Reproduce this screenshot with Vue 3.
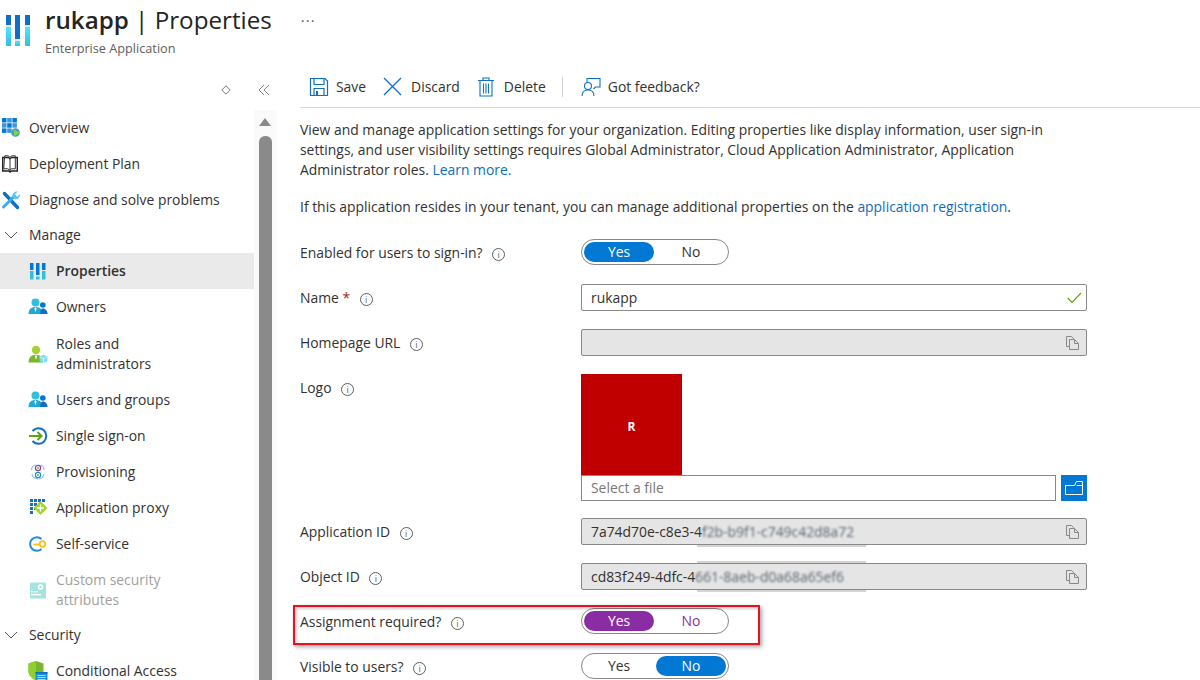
<script setup>
const nav = [
  { label: 'Overview', icon: 'overview', level: 0 },
  { label: 'Deployment Plan', icon: 'book', level: 0 },
  { label: 'Diagnose and solve problems', icon: 'tools', level: 0 },
  { label: 'Manage', group: true },
  { label: 'Properties', icon: 'props', level: 1, active: true },
  { label: 'Owners', icon: 'users', level: 1 },
  { label: 'Roles and administrators', icon: 'roles', level: 1, tall: true, extra: true },
  { label: 'Users and groups', icon: 'users', level: 1 },
  { label: 'Single sign-on', icon: 'sso', level: 1 },
  { label: 'Provisioning', icon: 'prov', level: 1 },
  { label: 'Application proxy', icon: 'proxy', level: 1 },
  { label: 'Self-service', icon: 'self', level: 1 },
  { label: 'Custom security attributes', icon: 'custom', level: 1, tall: true, disabled: true },
  { label: 'Security', group: true },
  { label: 'Conditional Access', icon: 'cond', level: 1 }
]
const icons = {
  overview: '<rect x="2" y="0" width="4.500" height="4.500" fill="#0078d4"/><rect x="7.200" y="0" width="4.500" height="4.500" fill="#3a96dd"/><rect x="12.400" y="0" width="4.500" height="4.500" fill="#0078d4"/><rect x="2" y="5.200" width="4.500" height="4.500" fill="#3a96dd"/><rect x="7.200" y="5.200" width="4.500" height="4.500" fill="#0078d4"/><rect x="12.400" y="5.200" width="4.500" height="4.500" fill="#3a96dd"/><rect x="2" y="10.400" width="4.500" height="4.500" fill="#0078d4"/><rect x="7.200" y="10.400" width="4.500" height="4.500" fill="#3a96dd"/><circle cx="15.500" cy="14.500" r="4.300" fill="#3f9ad8"/><path d="M13.500 11.500l6 3-5 4z" fill="#86d633"/>',
  book: '<path d="M2.700 3.500h5.800l1.500 1.200 1.500-1.200h5.800v13.500h-6l-1.300 1-1.300-1h-6z" fill="none" stroke="#222" stroke-width="1.400"/><path d="M10 4.700v12.300M4.700 1.800h3.500L10 3.300l1.800-1.500h3.500v13h-4l-1.800 1.200-1.800-1.200h-4z" fill="none" stroke="#333" stroke-width="1"/>',
  tools: '<path d="M4.500 3.500L17.500 17.500" stroke="#0f6fc6" stroke-width="3.400" stroke-linecap="round"/><path d="M3 2l3 1.500.5 2-2 .5z" fill="#0f6fc6"/><path d="M14.500 6L3.500 17" stroke="#38ade6" stroke-width="3" stroke-linecap="round"/><path d="M12.500 6.500c-.5-3 2-5.500 5.500-5l-3 2.500.5 2 2 .5 2.500-2.500c.3 3.500-2.500 6-5.500 5z" fill="#5cc4ef"/>',
  props: '<rect x="2" y="2" width="3.500" height="7" fill="#0078d4"/><rect x="2" y="10" width="3.500" height="8.500" fill="#32bedd"/><rect x="8" y="2" width="3.500" height="12" fill="#0078d4"/><rect x="8" y="15.500" width="3.500" height="3" fill="#32bedd"/><rect x="14" y="2" width="3.500" height="7" fill="#0078d4"/><rect x="14" y="10" width="3.500" height="8.500" fill="#32bedd"/>',
  users: '<circle cx="7.500" cy="5.500" r="4" fill="#32bedd"/><path d="M.5 17c0-4.500 2.500-7 7-7s7 2.500 7 7z" fill="#1faad6"/><circle cx="14.800" cy="8" r="2.800" fill="#0078d4"/><path d="M12 17c.3-3.500 1-5.500 2.800-5.500s4.700 1.500 4.700 5.500z" fill="#0f6fc6"/><path d="M7.500 10l-1.200 1.500 1.200 3.500 1.200-3.500z" fill="#fff"/>',
  roles: '<circle cx="8" cy="6" r="4.200" fill="#a4d233"/><path d="M.5 18.500c0-5 2.500-7.800 7.500-7.800s7 2.800 7 7.800z" fill="#76b82a"/><path d="M8 10.700l-1.200 1.500 1.200 3.500 1.200-3.500z" fill="#fff"/><path d="M15.500 10.500l4 2.200v4.300l-4 2.200-4-2.200v-4.300z" fill="#7fdbf0"/><path d="M15.500 14.700v4.500M11.500 12.700l4 2 4-2" stroke="#fff" stroke-width=".6" fill="none"/>',
  sso: '<path d="M4.500 5A7.800 7.800 0 1 1 4.500 15" fill="none" stroke="#0f6fc6" stroke-width="2"/><path d="M1 10h12.500M9.500 6l4 4-4 4" fill="none" stroke="#5ca80a" stroke-width="2"/>',
  prov: '<path d="M8 3C5 3.500 3.500 5.500 3.500 8M4 12c.5 3 3 4.800 6 5M11.500 3c3 .5 4.500 2.500 4.500 5M16 12c-.5 3-3 4.800-5.500 5" fill="none" stroke="#8cc0e8" stroke-width="1.200"/><circle cx="10" cy="6" r="2.600" fill="#fff" stroke="#8a3ea8" stroke-width="1.200"/><circle cx="10" cy="6" r="1" fill="#7fa82a"/><circle cx="10" cy="13" r="2.600" fill="#fff" stroke="#1f8fc9" stroke-width="1.200"/><circle cx="10" cy="13" r="1" fill="#7fba00"/>',
  proxy: '<g fill="#0f6fc6"><rect x="2" y="1" width="3" height="3"/><rect x="6" y="1" width="3" height="3"/><rect x="10" y="1" width="3" height="3"/><rect x="14" y="1" width="3" height="3"/><rect x="2" y="5" width="3" height="3"/><rect x="6" y="5" width="3" height="3"/><rect x="2" y="9" width="3" height="3"/><rect x="6" y="9" width="3" height="3"/><rect x="2" y="13" width="3" height="3"/></g><path d="M12.500 3l7 7-7 7-7-7z" fill="#a4d233"/><path d="M12.500 6.500v7M9 10h7" stroke="#fff" stroke-width="1.300"/>',
  self: '<path d="M13.500 5A6.800 6.800 0 1 0 13.500 15" fill="none" stroke="#1f8fd9" stroke-width="2"/><circle cx="14.500" cy="10" r="2.800" fill="none" stroke="#f8c21c" stroke-width="1.800"/><path d="M5.500 10.500h6.500" stroke="#f8c21c" stroke-width="2"/>',
  custom: '<rect x="2" y="2.500" width="16" height="16" rx="1" fill="#a5e3e3"/><rect x="3" y="11" width="7" height="1.300" fill="#fff"/><rect x="3" y="14" width="10" height="1.300" fill="#fff"/><circle cx="12.500" cy="7" r="2" fill="none" stroke="#fff" stroke-width="1.400"/>',
  cond: '<path d="M8 0l7.500 2.500V10c0 4.500-3.500 7.500-7.500 9.500C4 17.500.5 14.500.5 10V2.500z" fill="#76b82a"/><path d="M8 0v19.500C4 17.500.5 14.500.5 10V2.500z" fill="#8ed12f"/><rect x="7.500" y="11" width="12" height="9" fill="#1b93dc"/><rect x="7.500" y="11" width="12" height="1.500" fill="#0f6fc6"/><path d="M9.500 14.500h8M9.500 16.500h8M9.500 18.500h8" stroke="#cdeafa" stroke-width=".8"/>'
}
</script>

<template>
  <div class="page">
    <header class="head">
      <svg class="logo" width="25" height="32" viewBox="0 0 25 32">
        <defs>
          <linearGradient id="lb" x1="0" x2="0" y1="0" y2="1"><stop offset="0" stop-color="#50e6ff"/><stop offset="1" stop-color="#32bedd"/></linearGradient>
        </defs>
        <rect x="0" y="0" width="5" height="10" fill="#0f6fc6"/>
        <rect x="0" y="12" width="5" height="19" fill="url(#lb)"/>
        <rect x="-.5" y="10" width="6" height="2" fill="#e6e6e6"/>
        <rect x="9" y="0" width="5" height="24" fill="#0f6fc6"/>
        <rect x="9" y="26" width="5" height="5" fill="url(#lb)"/>
        <rect x="8.500" y="24" width="6" height="2" fill="#e6e6e6"/>
        <rect x="19" y="0" width="5" height="10" fill="#0f6fc6"/>
        <rect x="19" y="12" width="5" height="19" fill="url(#lb)"/>
        <rect x="18.500" y="10" width="6" height="2" fill="#e6e6e6"/>
      </svg>
      <div class="titles">
        <h1 class="title"><b>rukapp</b> | Properties</h1>
        <p class="sub">Enterprise Application</p>
      </div>
      <span class="more">···</span>
    </header>

    <div class="body">
      <aside class="side">
        <div class="side-tools">
          <svg width="10" height="10" viewBox="0 0 10 10"><path d="M5 .8L9.200 5 5 9.200.8 5z" fill="none" stroke="#666" stroke-width=".9"/></svg>
          <svg width="12" height="12" viewBox="0 0 12 12"><path d="M6 1L1 6l5 5M11 1L6 6l5 5" fill="none" stroke="#777" stroke-width=".9"/></svg>
        </div>
        <div class="side-main">
          <nav class="nav">
            <div
              v-for="item in nav"
              :key="item.label"
              class="nav-row"
              :class="{ 'is-group': item.group, 'is-sub': item.level === 1, 'is-active': item.active, 'is-tall': item.tall, 'is-extra': item.extra, 'is-off': item.disabled }"
            >
              <svg v-if="item.group" class="chev" width="14" height="14" viewBox="0 0 14 14"><path d="M1 4l6 6 6-6" fill="none" stroke="#555" stroke-width="1"/></svg>
              <svg v-else class="ico" width="20" height="20" viewBox="0 0 20 20" v-html="icons[item.icon]"></svg>
              <span class="nav-text">{{ item.label }}</span>
            </div>
          </nav>
          <div class="scroll">
            <span class="arrow"></span>
            <span class="thumb"></span>
          </div>
        </div>
      </aside>

      <main class="main">
        <div class="toolbar">
          <button class="tool t-save">
            <svg width="20" height="20" viewBox="0 0 20 20" fill="none" stroke="#0f6fc6" stroke-width="1.200"><path d="M1.500 1.500h14.500l2.500 2.500v14.500h-17z"/><path d="M5 1.500v6h10v-6M5 18.500v-7h10v7"/><rect x="7" y="14" width="2" height="4" fill="#0f6fc6" stroke="none"/></svg>
            <span>Save</span>
          </button>
          <button class="tool t-discard">
            <svg width="19" height="19" viewBox="0 0 19 19" fill="none" stroke="#0f6fc6" stroke-width="1.300"><path d="M1 1l17 17M18 1L1 18"/></svg>
            <span>Discard</span>
          </button>
          <button class="tool t-delete">
            <svg width="16" height="20" viewBox="0 0 16 20" fill="none" stroke="#0f6fc6" stroke-width="1.100"><path d="M0 3.500h16M5 3.500V1h6v2.500M2 3.500V19h12V3.500M5.500 6.500v10M8 6.500v10M10.500 6.500v10"/></svg>
            <span>Delete</span>
          </button>
          <span class="tool-sep"></span>
          <button class="tool t-feedback">
            <svg width="20" height="20" viewBox="0 0 20 20" fill="none" stroke="#0f6fc6" stroke-width="1.100"><path d="M6 5V1.500h13V10h-4.500l-2 2"/><circle cx="7" cy="9" r="3.500"/><path d="M1 19c0-4 2.500-6 6-6s6 2 6 6"/></svg>
            <span>Got feedback?</span>
          </button>
        </div>

        <div class="content">
          <p class="desc">View and manage application settings for your organization. Editing properties like display information, user sign-in settings, and user visibility settings requires Global Administrator, Cloud Application Administrator, Application Administrator roles. <a class="link">Learn more.</a></p>
          <p class="desc second">If this application resides in your tenant, you can manage additional properties on the <a class="link">application registration</a>.</p>

          <div class="form">
            <div class="row r-toggle">
              <label class="lbl">Enabled for users to sign-in? <i class="info">i</i></label>
              <div class="toggle"><span class="opt on">Yes</span><span class="opt">No</span></div>
            </div>
            <div class="row r-input">
              <label class="lbl">Name <em class="req">*</em> <i class="info">i</i></label>
              <div class="field">
                <span class="val">rukapp</span>
                <svg class="tick" width="15" height="12" viewBox="0 0 15 12"><path d="M.8 6l4.200 4.500L14 1" fill="none" stroke="#57a300" stroke-width="1.100"/></svg>
              </div>
            </div>
            <div class="row r-input">
              <label class="lbl">Homepage URL <i class="info">i</i></label>
              <div class="field ro">
                <span class="val"></span>
                <svg class="copy" width="13" height="14" viewBox="0 0 13 14" fill="none" stroke="#888"><path d="M3.500 10.500H.5V.5h5l2 2v1M3.500 3.500h5l4 4v6h-9z"/><path d="M8.500 3.500v4h4"/></svg>
              </div>
            </div>
            <div class="row r-logo">
              <label class="lbl">Logo <i class="info">i</i></label>
              <div class="logo-col">
                <div class="logo-box">R</div>
                <div class="file-line">
                  <div class="file-input">Select a file</div>
                  <span class="file-btn">
                    <svg width="18" height="14" viewBox="0 0 18 14" fill="none" stroke="#fff" stroke-width="1"><path d="M.5 4.500h9l2-4h6v13H.5zM11.500 4.500h6"/></svg>
                  </span>
                </div>
              </div>
            </div>
            <div class="row r-input id-row">
              <label class="lbl">Application ID <i class="info">i</i></label>
              <div class="field ro">
                <span class="val">7a74d70e-c8e3-4<span class="blur">f2b-b9f1-c749c42d8a72</span></span>
                <span class="patch"></span>
                <svg class="copy" width="13" height="14" viewBox="0 0 13 14" fill="none" stroke="#888"><path d="M3.500 10.500H.5V.5h5l2 2v1M3.500 3.500h5l4 4v6h-9z"/><path d="M8.500 3.500v4h4"/></svg>
              </div>
            </div>
            <div class="row r-input id-row">
              <label class="lbl">Object ID <i class="info">i</i></label>
              <div class="field ro">
                <span class="val">cd83f249-4dfc-4<span class="blur">661-8aeb-d0a68a65ef6</span></span>
                <span class="patch two"></span>
                <svg class="copy" width="13" height="14" viewBox="0 0 13 14" fill="none" stroke="#888"><path d="M3.500 10.500H.5V.5h5l2 2v1M3.500 3.500h5l4 4v6h-9z"/><path d="M8.500 3.500v4h4"/></svg>
              </div>
            </div>
            <div class="row r-toggle hl-row">
              <span class="hl"></span>
              <label class="lbl">Assignment required? <i class="info">i</i></label>
              <div class="toggle purple"><span class="opt on">Yes</span><span class="opt">No</span></div>
            </div>
            <div class="row r-toggle">
              <label class="lbl">Visible to users? <i class="info">i</i></label>
              <div class="toggle"><span class="opt">Yes</span><span class="opt on">No</span></div>
            </div>
          </div>
        </div>
      </main>
    </div>
  </div>
</template>

<style>
html, body { margin: 0; background: #fff; overflow: hidden; }
</style>

<style scoped>
.page { width: 1200px; height: 680px; overflow: hidden; font-family: "Open Sans", "Liberation Sans", sans-serif; font-size: 13.900px; color: #323130; background: #fff; }
.head { height: 70px; display: flex; align-items: flex-start; box-sizing: border-box; padding: 15px 0 0 6px; }
.logo { flex: none; overflow: visible; }
.titles { margin-left: 14px; margin-top: -11px; }
.title { margin: 0; font-size: 24.200px; font-weight: 400; line-height: 32px; color: #252423; white-space: nowrap; }
.title b { font-weight: 600; }
.sub { margin: 4px 0 0; font-size: 12.700px; line-height: 16px; color: #605e5c; }
.more { margin: -5px 0 0 29px; font-size: 15px; color: #605e5c; letter-spacing: 1px; }
.body { display: flex; height: 610px; }
.side { width: 277px; flex: none; display: flex; flex-direction: column; }
.side-tools { height: 40px; display: flex; justify-content: flex-end; align-items: center; gap: 27px; padding-right: 7px; box-sizing: border-box; }
.side-main { display: flex; flex: 1; min-height: 0; }
.nav { width: 254px; flex: none; }
.nav-row { min-height: 36px; box-sizing: border-box; display: flex; align-items: center; }
.ico { flex: none; margin-right: 9px; }
.nav-row.is-sub { padding-left: 28px; }
.nav-row.is-sub .ico { margin-right: 8px; }
.nav-row.is-group { padding: 0 0 2px 4px; height: 35px; min-height: 35px; }
.nav-row.is-tall { height: 56px; }
.nav-row.is-extra { height: 57px; }
.nav-row.is-active { background: #ebeaea; font-weight: 600; }
.nav-row.is-off { color: #a19f9d; }
.chev { flex: none; margin-right: 11px; }
.nav-text { line-height: 20px; }
.is-tall .nav-text { width: 130px; }
.scroll { width: 23px; flex: none; background: #fafafa; display: flex; flex-direction: column; align-items: center; padding-right: 1px; box-sizing: border-box; }
.arrow { width: 0; height: 0; border-left: 6px solid transparent; border-right: 6px solid transparent; border-bottom: 8px solid #8a8a8a; margin-top: 8px; }
.thumb { width: 13px; flex: 1; margin-top: 10px; background: #8a8a8a; border-radius: 6px 6px 0 0; }
.main { flex: 1; min-width: 0; margin-left: 23px; }
.toolbar { height: 38px; box-sizing: border-box; border-bottom: 1px solid #d9d9d9; display: flex; align-items: center; padding: 0 0 4px 9px; }
.tool { display: flex; align-items: center; border: 0; padding: 0; background: none; font: inherit; color: #323130; }
.t-save { gap: 7px; margin-right: 17px; }
.t-discard { gap: 9px; margin-right: 18px; }
.t-delete { gap: 10px; margin-right: 16px; }
.t-feedback { gap: 7px; }
.tool-sep { width: 1px; height: 20px; background: #d2d0ce; margin-right: 18px; }
.content { padding-top: 12px; width: 787px; }
.desc { margin: 0; line-height: 20px; width: 752px; }
.desc.second { margin-top: 17px; width: auto; white-space: nowrap; }
.link { color: #0f6cbd; }
.form { margin-top: 22px; }
.row { display: flex; position: relative; }
.lbl { width: 281px; flex: none; white-space: nowrap; }
.r-toggle { height: 26px; margin-bottom: 19px; align-items: center; }
.r-input { height: 27px; margin-bottom: 18px; align-items: center; }
.r-logo { height: 127px; margin-bottom: 17px; align-items: flex-start; }
.r-logo .lbl { line-height: 27px; }
.info { display: inline-block; width: 11px; height: 11px; border: 1px solid #605e5c; border-radius: 50%; font-style: normal; font-size: 9px; line-height: 11px; text-align: center; color: #605e5c; margin-left: 6px; vertical-align: 0; }
.req { color: #a4262c; font-style: normal; }
.toggle { width: 148px; height: 26px; box-sizing: border-box; border: 1px solid #8a8886; border-radius: 13px; padding: 2px; display: flex; gap: 2px; }
.opt { flex: 1; text-align: center; line-height: 20px; border-radius: 10px; }
.opt.on { background: #0078d4; color: #fff; }
.toggle.purple .opt { color: #8a2da5; }
.toggle.purple .opt.on { background: #8a2da5; color: #fff; }
.field { position: relative; width: 506px; height: 27px; box-sizing: border-box; border: 1px solid #8a8886; border-radius: 2px; display: flex; align-items: center; justify-content: space-between; padding: 0 7px 0 9px; white-space: nowrap; }
.val { margin-top: -1px; }
.field.ro { background: #e5e5e5; }
.tick { margin-right: -3px; }
.blur { filter: blur(1px); display: inline-block; color: #5a6472; }
.patch { position: absolute; left: 115px; top: 26px; width: 169px; height: 2px; background: #d4d4d4; }
.patch.two { top: -3px; height: 2px; }
.patch.two::after { content: ""; position: absolute; left: 0; top: 29px; width: 169px; height: 2px; background: #d4d4d4; }
.logo-col { width: 506px; }
.logo-box { width: 101px; height: 101px; box-sizing: border-box; padding-top: 4px; background: #c00000; color: #fff; font-weight: 700; font-size: 12px; display: flex; align-items: center; justify-content: center; }
.file-line { display: flex; justify-content: space-between; }
.file-input { width: 475px; height: 26px; box-sizing: border-box; border: 1px solid #8a8886; line-height: 24px; padding-left: 9px; color: #797775; }
.file-btn { width: 26px; height: 26px; background: #0078d4; display: flex; align-items: center; justify-content: center; }
.hl { position: absolute; left: -7px; top: -3px; width: 467px; height: 40px; box-sizing: border-box; border: 2px solid #e81123; box-shadow: 2px 2px 4px rgba(0,0,0,.35), inset 2px 2px 3px rgba(0,0,0,.2); pointer-events: none; }
</style>
